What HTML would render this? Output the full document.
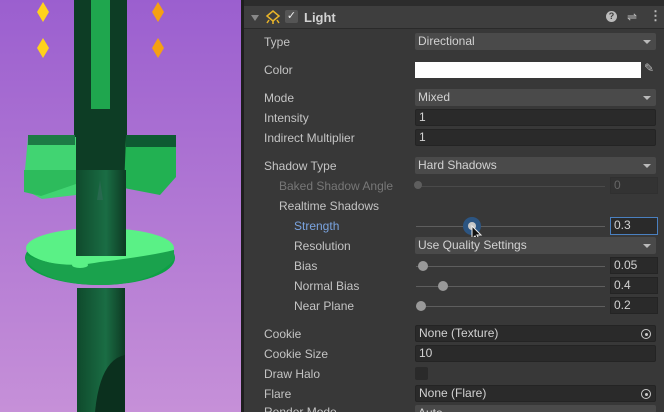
<!DOCTYPE html><html style="width:664px;height:412px;overflow:hidden"><head><style>
body{margin:0;width:664px;height:412px;overflow:hidden;background:#383838;font-family:"Liberation Sans",sans-serif;font-size:12px;color:#c4c4c4;position:relative}
.a{position:absolute}
.l{position:absolute;left:264px;line-height:14px;margin-top:1px}
.f{position:absolute;left:415px;width:241px;height:17px;border-radius:2px;line-height:17px;padding-left:3px;box-sizing:border-box;margin-top:1px}
.dd{background:#4a4a4a;color:#d2d2d2}
.tx{background:#2a2a2a;border:1px solid #242424;color:#d2d2d2;line-height:15px}
.arr{position:absolute;right:5px;top:7px;border-left:4px solid transparent;border-right:4px solid transparent;border-top:4px solid #bbb}
.tr{position:absolute;left:416px;width:189px;height:1px;background:#5e5e5e}
.th{position:absolute;width:10px;height:10px;border-radius:5px;background:#999}
.v{position:absolute;left:610px;width:48px;height:17px;background:#2a2a2a;border:1px solid #242424;box-sizing:border-box;line-height:15px;padding-left:3px;color:#d2d2d2;margin-top:1px}
.pk{position:absolute;right:4px;top:3px;width:8px;height:8px;border:1.5px solid #ccc;border-radius:50%}
.pk:after{content:"";position:absolute;left:2.5px;top:2.5px;width:3px;height:3px;background:#ccc;border-radius:50%}
</style></head><body>
<svg class="a" style="left:0;top:0" width="244" height="412">
<defs><linearGradient id="bg" x1="0" y1="0" x2="0" y2="1"><stop offset="0" stop-color="#9b5fcf"/><stop offset="1" stop-color="#c690d8"/></linearGradient>
<linearGradient id="pl" x1="0" y1="0" x2="1" y2="0"><stop offset="0" stop-color="#0f4a2c"/><stop offset=".6" stop-color="#1a6d44"/><stop offset="1" stop-color="#0d3a23"/></linearGradient></defs>
<rect width="242" height="412" fill="url(#bg)"/>
<rect x="241" y="0" width="3" height="412" fill="#1e1e1e"/>
<g fill="#ffd21c"><path d="M43 2l6 10-6 10-6-10z"/><path d="M43 38l6 10-6 10-6-10z"/></g>
<g fill="#f5a012"><path d="M158 2l6 10-6 10-6-10z"/><path d="M158 38l6 10-6 10-6-10z"/></g>
<rect x="74" y="0" width="53" height="170" fill="#0d3d25"/>
<rect x="91" y="0" width="19" height="109" fill="#1fa64e"/>
<path d="M28 137h48v58l-34 4-17-9v-20z" fill="#41d472"/><path d="M24 170h52v14l-35 12-17-4z" fill="#2dbb5c"/>
<rect x="28" y="135" width="47" height="10" fill="#1d7a45"/>
<path d="M126 137h50v40l-16 18-36-7z" fill="#22b152"/><rect x="126" y="135" width="50" height="12" fill="#0e5a32"/>
<path d="M76 170h50v85H76z" fill="url(#pl)"/>
<path d="M100 180l6 40h-12z" fill="#2f6a55" opacity=".7"/>
<ellipse cx="100" cy="224" rx="9" ry="11" fill="#b02f86"/>
<ellipse cx="100" cy="258" rx="75" ry="27" fill="#0da045"/>
<ellipse cx="100" cy="248" rx="74" ry="20" fill="#5af186"/>
<path d="M26 255 Q60 270 100 262 Q150 256 174 250 L174 260 Q150 285 100 285 Q50 285 26 262z" fill="#1aa24d"/>
<rect x="76" y="200" width="50" height="56" fill="url(#pl)"/>
<ellipse cx="80" cy="265" rx="8" ry="3" fill="#5af186"/>
<rect x="77" y="288" width="48" height="124" fill="url(#pl)"/>
<path d="M95 412 Q100 360 125 355 V412z" fill="#0b301e"/>
</svg>
<div class="a" style="left:244px;top:0;width:420px;height:6px;background:#2c2c2c"></div>
<div class="a" style="left:244px;top:6px;width:420px;height:22px;background:#3e3e3e;border-bottom:1px solid #2a2a2a"></div>
<div class="a" style="left:251px;top:15px;border-left:4px solid transparent;border-right:4px solid transparent;border-top:6px solid #888"></div>
<svg class="a" style="left:265px;top:10px" width="16" height="14"><path d="M2 6l6-5 6 5-6 5z" fill="none" stroke="#e8b429" stroke-width="1.5"/><path d="M4 10l-2 3M8 11v3M12 10l2 3" stroke="#e8b429" stroke-width="1.5"/></svg>
<div class="a" style="left:285px;top:10px;width:13px;height:13px;background:#555;border-radius:2px;color:#eee;font-size:11px;line-height:13px;text-align:center">✓</div>
<div class="a" style="left:304px;top:10px;font-size:13px;font-weight:bold;color:#d2d2d2">Light</div>
<div class="a" style="left:606px;top:11px;width:11px;height:11px;border-radius:6px;background:#bbb;color:#3e3e3e;font-size:9px;font-weight:bold;line-height:11px;text-align:center">?</div>
<div class="a" style="left:627px;top:10px;color:#bbb;font-size:12px">⇌</div>
<div class="a" style="left:649px;top:8px;color:#bbb;font-size:13px;font-weight:bold">⋮</div>

<div class="l" style="top:34px">Type</div><div class="f dd" style="top:32px">Directional<i class="arr"></i></div>
<div class="l" style="top:62px">Color</div><div class="a" style="left:415px;top:62px;width:226px;height:16px;background:#fff"></div><div class="a" style="left:644px;top:61px;color:#bbb;font-size:12px">✎</div>
<div class="l" style="top:90px">Mode</div><div class="f dd" style="top:88px">Mixed<i class="arr"></i></div>
<div class="l" style="top:110px">Intensity</div><div class="f tx" style="top:108px">1</div>
<div class="l" style="top:130px">Indirect Multiplier</div><div class="f tx" style="top:128px">1</div>
<div class="l" style="top:158px">Shadow Type</div><div class="f dd" style="top:156px">Hard Shadows<i class="arr"></i></div>
<div class="l" style="top:178px;left:279px;color:#777">Baked Shadow Angle</div><div class="tr" style="top:186px;background:#4a4a4a"></div><div class="th" style="left:414px;top:181px;background:#5e5e5e;width:8px;height:8px"></div><div class="v" style="top:176px;color:#666;border-color:#303030;background:#333">0</div>
<div class="l" style="top:198px;left:279px">Realtime Shadows</div>
<div class="l" style="top:218px;left:294px;color:#7aa4e0">Strength</div><div class="tr" style="top:226px"></div><div class="th" style="left:463px;top:217px;width:18px;height:18px;border-radius:9px;background:#2c5582"></div><div class="th" style="left:468px;top:222px;width:8px;height:8px;background:#c8c8c8"></div><div class="v" style="top:216px;border-color:#4a80c0;height:18px">0.3</div>
<svg class="a" style="left:471px;top:225px" width="12" height="18"><path d="M1 1v13l3-3 3 6 2-1-3-6h4z" fill="#111" stroke="#eee" stroke-width="1"/></svg>
<div class="l" style="top:238px;left:294px">Resolution</div><div class="f dd" style="top:236px">Use Quality Settings<i class="arr"></i></div>
<div class="l" style="top:258px;left:294px">Bias</div><div class="tr" style="top:266px"></div><div class="th" style="left:418px;top:261px"></div><div class="v" style="top:256px">0.05</div>
<div class="l" style="top:278px;left:294px">Normal Bias</div><div class="tr" style="top:286px"></div><div class="th" style="left:438px;top:281px"></div><div class="v" style="top:276px">0.4</div>
<div class="l" style="top:298px;left:294px">Near Plane</div><div class="tr" style="top:306px"></div><div class="th" style="left:416px;top:301px"></div><div class="v" style="top:296px">0.2</div>
<div class="l" style="top:326px">Cookie</div><div class="f tx" style="top:324px">None (Texture)<i class="pk"></i></div>
<div class="l" style="top:346px">Cookie Size</div><div class="f tx" style="top:344px">10</div>
<div class="l" style="top:366px">Draw Halo</div><div class="a" style="left:415px;top:367px;width:13px;height:13px;background:#2a2a2a;border-radius:2px"></div>
<div class="l" style="top:386px">Flare</div><div class="f tx" style="top:384px">None (Flare)<i class="pk"></i></div>
<div class="l" style="top:404px">Render Mode</div><div class="f dd" style="top:404px;height:8px">Auto</div>
</body></html>
